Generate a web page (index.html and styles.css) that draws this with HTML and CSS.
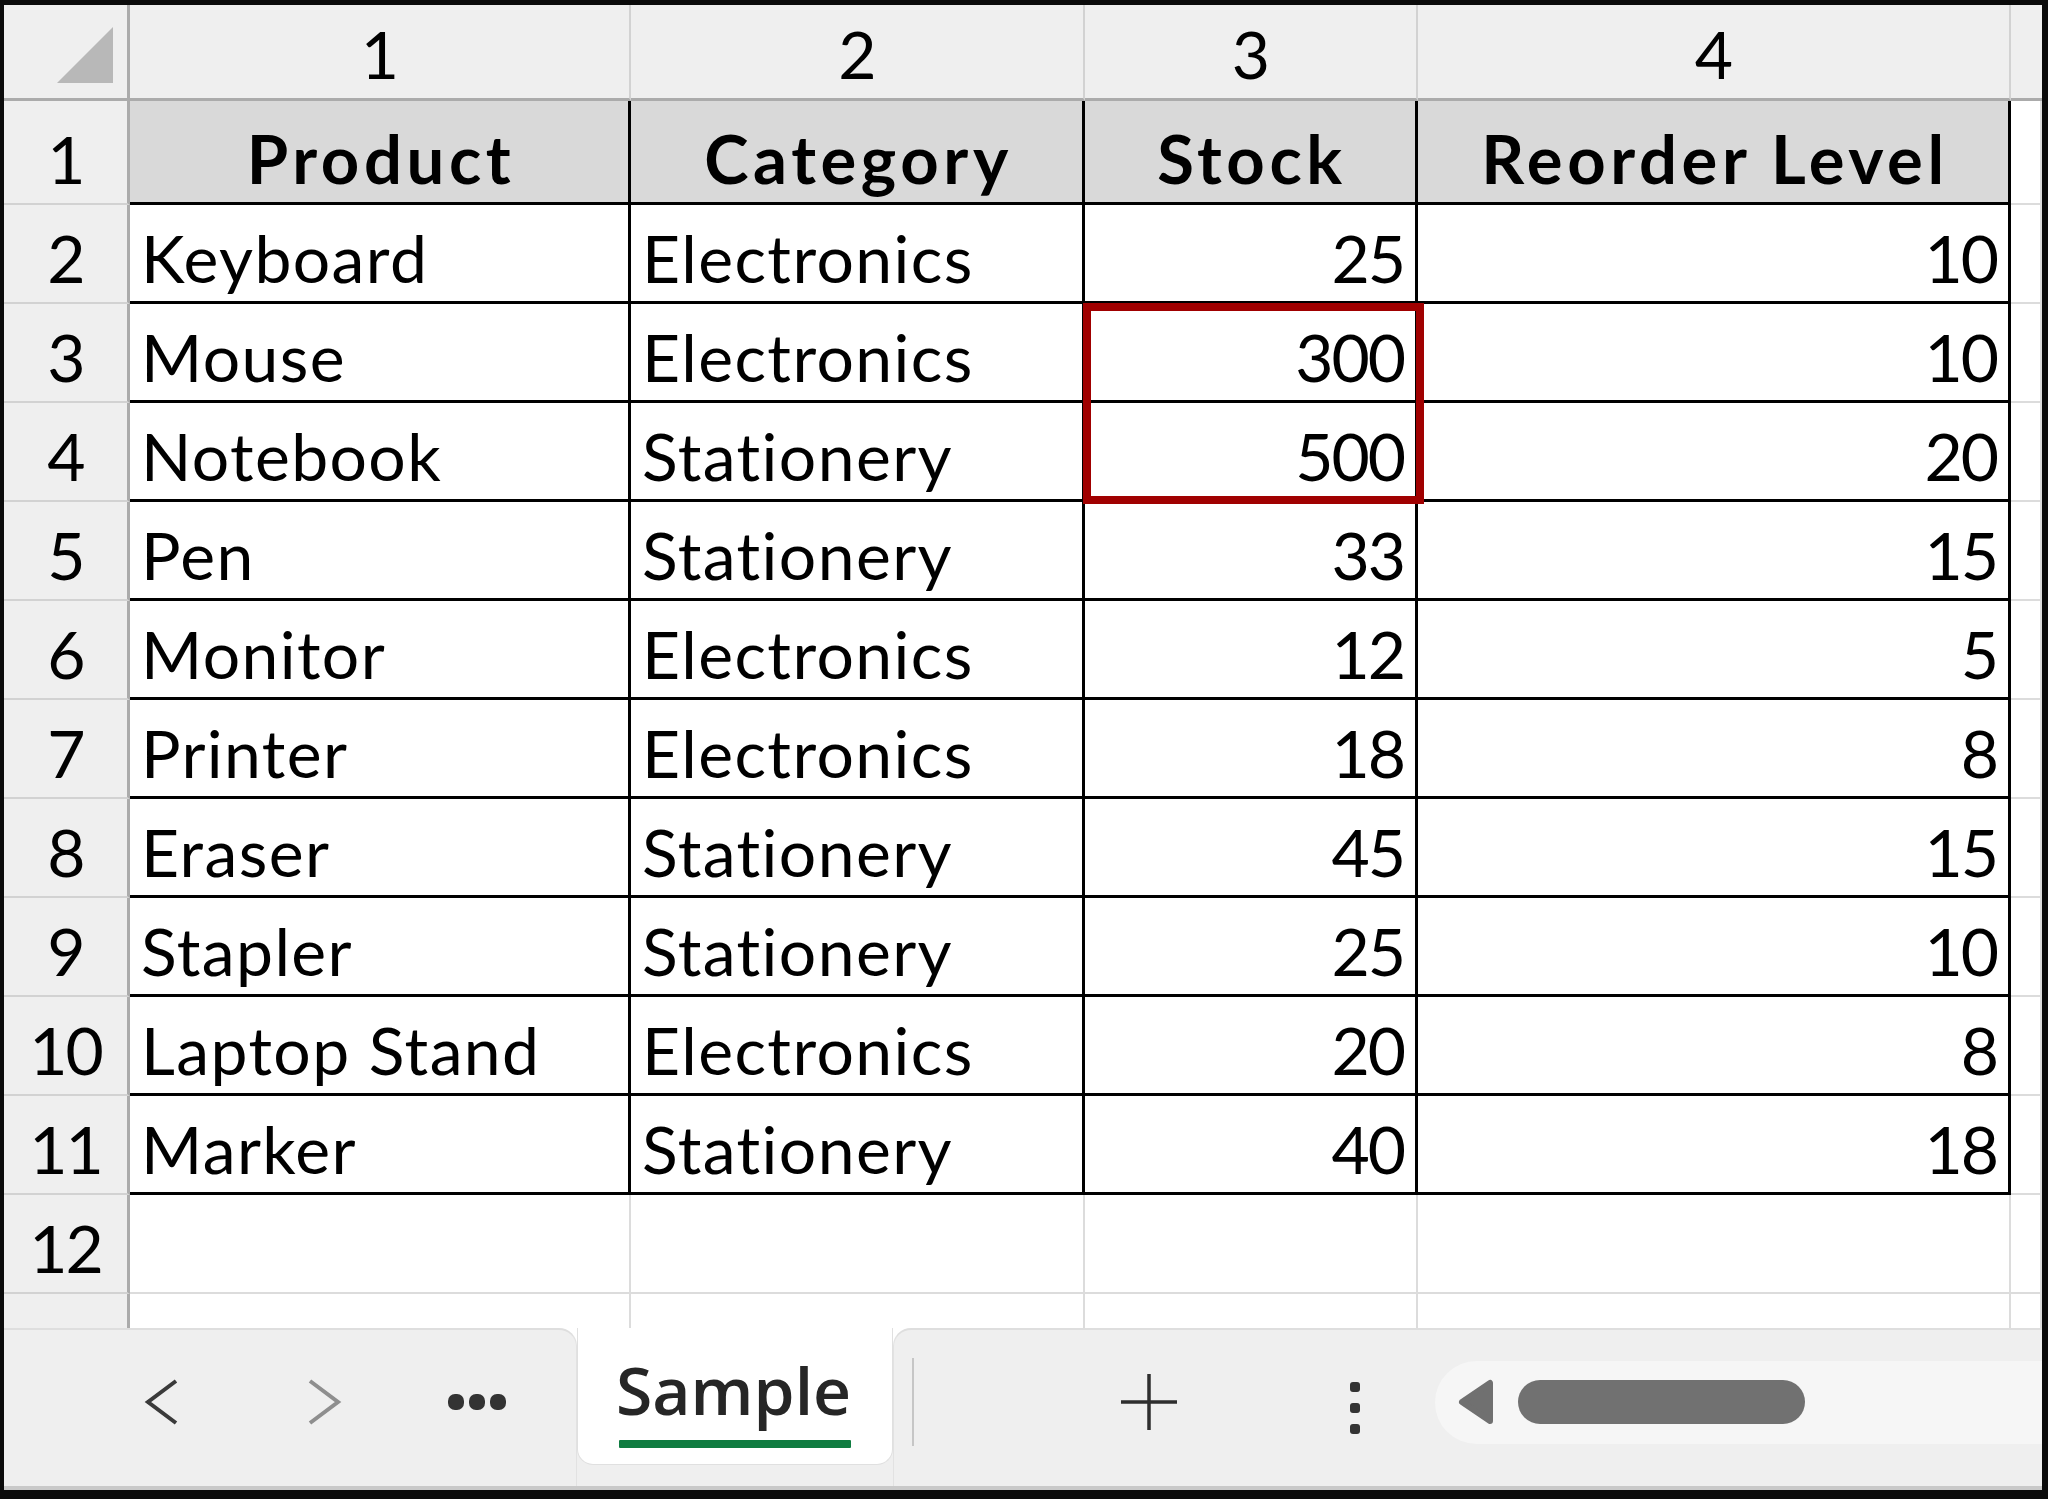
FILE: index.html
```html
<!DOCTYPE html>
<html lang="en">
<head>
<meta charset="utf-8">
<title>Sample</title>
<link rel="stylesheet" href="styles.css">
</head>
<body>
<div class="frame">
  <div class="sheet">
    <div class="corner"><svg class="tri" width="56" height="56" viewBox="0 0 56 56"><polygon points="0,56 56,56 56,0" fill="#b8b8b8"/></svg></div>
    <div class="ch">1</div><div class="ch">2</div><div class="ch">3</div><div class="ch">4</div><div class="ch last"></div>

    <div class="rh">1</div>
    <div class="c hd">Product</div><div class="c hd">Category</div><div class="c hd">Stock</div><div class="c hd">Reorder Level</div><div class="g"></div>

    <div class="rh">2</div>
    <div class="c">Keyboard</div><div class="c">Electronics</div><div class="c n">25</div><div class="c n">10</div><div class="g"></div>

    <div class="rh">3</div>
    <div class="c">Mouse</div><div class="c">Electronics</div><div class="c n">300</div><div class="c n">10</div><div class="g"></div>

    <div class="rh">4</div>
    <div class="c">Notebook</div><div class="c">Stationery</div><div class="c n">500</div><div class="c n">20</div><div class="g"></div>

    <div class="rh">5</div>
    <div class="c">Pen</div><div class="c">Stationery</div><div class="c n">33</div><div class="c n">15</div><div class="g"></div>

    <div class="rh">6</div>
    <div class="c">Monitor</div><div class="c">Electronics</div><div class="c n">12</div><div class="c n">5</div><div class="g"></div>

    <div class="rh">7</div>
    <div class="c">Printer</div><div class="c">Electronics</div><div class="c n">18</div><div class="c n">8</div><div class="g"></div>

    <div class="rh">8</div>
    <div class="c">Eraser</div><div class="c">Stationery</div><div class="c n">45</div><div class="c n">15</div><div class="g"></div>

    <div class="rh">9</div>
    <div class="c">Stapler</div><div class="c">Stationery</div><div class="c n">25</div><div class="c n">10</div><div class="g"></div>

    <div class="rh">10</div>
    <div class="c">Laptop Stand</div><div class="c">Electronics</div><div class="c n">20</div><div class="c n">8</div><div class="g"></div>

    <div class="rh">11</div>
    <div class="c">Marker</div><div class="c">Stationery</div><div class="c n">40</div><div class="c n">18</div><div class="g"></div>

    <div class="rh">12</div>
    <div class="g"></div><div class="g"></div><div class="g"></div><div class="g"></div><div class="g"></div>

    <div class="rh part"></div>
    <div class="g part"></div><div class="g part"></div><div class="g part"></div><div class="g part"></div><div class="g part"></div>

    <div class="selection"></div>
  </div>

  <div class="tabbar">
    <div class="nav">
      <svg class="prev" width="36" height="48" viewBox="0 0 36 48"><polyline points="33,3 5,24 33,45" fill="none" stroke="#3a3a3a" stroke-width="4"/></svg>
      <svg class="next" width="36" height="48" viewBox="0 0 36 48"><polyline points="3,3 31,24 3,45" fill="none" stroke="#8e8e8e" stroke-width="4"/></svg>
      <svg class="more" width="58" height="18" viewBox="0 0 58 18"><rect x="0" y="1" width="16" height="16" rx="7" fill="#333"/><rect x="21" y="1" width="16" height="16" rx="7" fill="#333"/><rect x="42" y="1" width="16" height="16" rx="7" fill="#333"/></svg>
    </div>
    <div class="tab">
      <div class="tab-label">Sample</div>
      <div class="tab-line"></div>
    </div>
    <div class="rest">
      <div class="divider"></div>
      <svg class="plus" width="56" height="56" viewBox="0 0 56 56"><line x1="28" y1="0" x2="28" y2="56" stroke="#2e2e2e" stroke-width="3.5"/><line x1="0" y1="28" x2="56" y2="28" stroke="#2e2e2e" stroke-width="3.5"/></svg>
      <svg class="kebab" width="10" height="52" viewBox="0 0 10 52"><rect x="0" y="0" width="10" height="10" rx="3" fill="#333"/><rect x="0" y="21" width="10" height="10" rx="3" fill="#333"/><rect x="0" y="42" width="10" height="10" rx="3" fill="#333"/></svg>
      <div class="track">
        <svg class="arrow" width="36" height="46" viewBox="0 0 36 46"><polygon points="32,4 32,42 4,23" fill="#707070" stroke="#707070" stroke-width="6" stroke-linejoin="round"/></svg>
        <div class="thumb"></div>
      </div>
    </div>
  </div>
</div>
</body>
</html>
```

FILE: styles.css
```css
* { box-sizing: border-box; }

html, body {
  margin: 0;
  padding: 0;
  background: #ffffff;
}

.frame {
  width: 2048px;
  height: 1499px;
  border-style: solid;
  border-color: #0b0b0b;
  border-width: 5px 6px 9px 4px;
  display: flex;
  flex-direction: column;
  font-family: Lato, "Liberation Sans", sans-serif;
  color: #000;
  overflow: hidden;
}

/* ---------- grid ---------- */
.sheet {
  position: relative;
  display: grid;
  grid-template-columns: 126px 501px 454px 333px 593px 31px;
  grid-template-rows: 96px 104px repeat(11, 99px) 34px;
  background: #ffffff;
}

.corner {
  background: #efefef;
  border-right: 3px solid #ababab;
  border-bottom: 3px solid #ababab;
  display: flex;
  justify-content: flex-end;
  align-items: flex-end;
  padding: 0 14px 15px 0;
}

.ch {
  background: #efefef;
  border-right: 2px solid #d2d2d2;
  border-bottom: 3px solid #ababab;
  display: flex;
  justify-content: center;
  align-items: flex-end;
  font-size: 66px;
  line-height: 79px;
  letter-spacing: -1px;
  padding-bottom: 5px;
}
.ch.last { border-right: none; }

.rh {
  background: #efefef;
  border-right: 3px solid #ababab;
  border-bottom: 2px solid #d2d2d2;
  display: flex;
  justify-content: center;
  align-items: flex-end;
  font-size: 66px;
  line-height: 79px;
  letter-spacing: -2px;
  padding-bottom: 5px;
}
.rh.part { border-bottom: none; }

.c {
  border-right: 3px solid #000;
  border-bottom: 3px solid #000;
  display: flex;
  justify-content: flex-start;
  align-items: flex-end;
  font-size: 66px;
  line-height: 79px;
  letter-spacing: 1.4px;
  padding: 0 12px 4px 11px;
  white-space: nowrap;
  overflow: hidden;
}
.c.n {
  justify-content: flex-end;
  letter-spacing: -2px;
  padding-right: 11px;
}
.c.hd {
  background: #d9d9d9;
  justify-content: center;
  font-weight: 700;
  font-size: 67px;
  letter-spacing: 4.6px;
  padding-left: 4px;
  padding-right: 0;
}

.g {
  border-right: 2px solid #dcdcdc;
  border-bottom: 2px solid #dcdcdc;
}
.g.part { border-bottom: none; }

.selection {
  position: absolute;
  left: 1079px;
  top: 298px;
  width: 341px;
  height: 201px;
  border: 8px solid #a00000;
  pointer-events: none;
}

/* ---------- sheet tab bar ---------- */
.tabbar {
  height: 162px;
  flex: none;
  display: flex;
  align-items: stretch;
  background: linear-gradient(#ffffff, #ffffff) top left / 100% 40px no-repeat, #efefef;
  border-bottom: 4px solid #c9c9c9;
}

.nav {
  width: 573px;
  flex: none;
  background: #efefef;
  border-top: 2px solid #dedede;
  border-right: 1px solid #e2e2e2;
  border-top-right-radius: 18px;
  display: flex;
  align-items: center;
  padding-bottom: 12px;
}
.prev { margin-left: 139px; }
.next { margin-left: 128px; }
.more { margin-left: 105px; }

.tab {
  width: 316px;
  height: 137px;
  flex: none;
  align-self: flex-start;
  background: #ffffff;
  border: 1px solid #e0e0e0;
  border-top: none;
  border-radius: 0 0 16px 16px;
  padding: 21px 0 0 38px;
  display: flex;
  flex-direction: column;
  align-items: flex-start;
}
.tab-label {
  font-family: "Open Sans", "Noto Sans", sans-serif;
  font-weight: 600;
  font-size: 66px;
  line-height: 80px;
  color: #262626;
}
.tab-line {
  width: 232px;
  height: 8px;
  margin: 11px 0 0 3px;
  background: #107c41;
  border-radius: 1px;
}

.rest {
  flex: 1;
  background: #efefef;
  border-top: 2px solid #dedede;
  border-left: 1px solid #e2e2e2;
  border-top-left-radius: 18px;
  display: flex;
  align-items: center;
  padding-bottom: 12px;
}
.divider {
  width: 2px;
  height: 88px;
  margin-left: 18px;
  background: #c6c6c6;
}
.plus { margin-left: 207px; }
.kebab { margin-left: 173px; margin-top: 12px; }
.track {
  flex: 1;
  height: 83px;
  margin-left: 75px;
  background: #f6f6f6;
  border-radius: 42px 0 0 42px;
  display: flex;
  align-items: center;
}
.arrow { margin-left: 23px; }
.thumb {
  width: 287px;
  height: 44px;
  margin-left: 24px;
  background: #717171;
  border-radius: 22px;
}
```
